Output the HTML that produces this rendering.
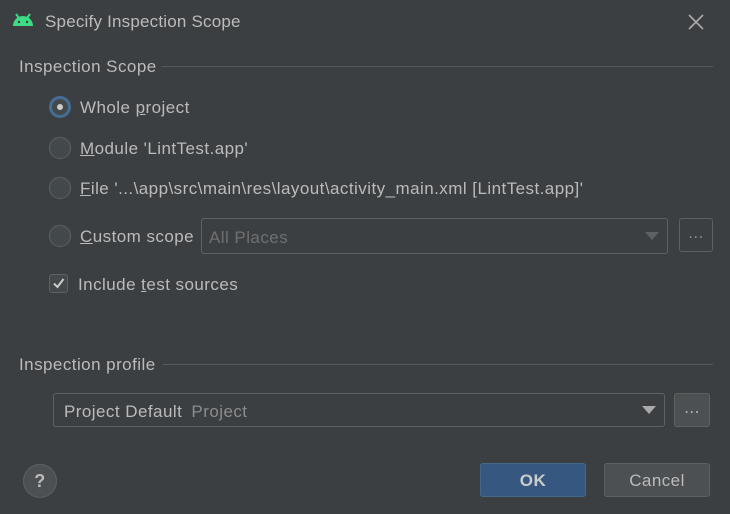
<!DOCTYPE html>
<html><head><meta charset="utf-8"><style>
*{margin:0;padding:0;box-sizing:border-box}
body{width:730px;height:514px;background:#3c3f41;font-family:"Liberation Sans",sans-serif;color:#bbbbbb;position:relative;overflow:hidden;font-size:17px;letter-spacing:0.45px}
.a{position:absolute;white-space:nowrap}
.sep{position:absolute;height:1px;background:#555859}
.radio{position:absolute;width:22px;height:22px;border-radius:50%;border:1px solid #5e6164;background:#43494a}
.box{position:absolute;border:1px solid #5e6164;border-radius:3px}
.btn{position:absolute;border:1px solid #5e6060;border-radius:3px;background:#4c5052;text-align:center;color:#bbb}
u{text-decoration:underline}
</style></head><body>
<svg class="a" style="left:11px;top:12px" width="24" height="16" viewBox="0 0 24 16"><path d="M2 14 A10 10 0 0 1 22 14 Z" fill="#3ddc84"/><line x1="5" y1="2" x2="8" y2="6" stroke="#3ddc84" stroke-width="2"/><line x1="19" y1="2" x2="16" y2="6" stroke="#3ddc84" stroke-width="2"/><circle cx="8" cy="10" r="1.2" fill="#3c3f41"/><circle cx="16" cy="10" r="1.2" fill="#3c3f41"/></svg>
<div class="a" style="left:45px;top:12px;letter-spacing:0.2px">Specify Inspection Scope</div>
<svg class="a" style="left:687px;top:13px" width="18" height="18"><path d="M2 2L16 16M16 2L2 16" stroke="#aaa" stroke-width="1.6"/></svg>
<div class="a" style="left:19px;top:57px">Inspection Scope</div>
<div class="sep" style="left:161px;top:66px;width:552px"></div>
<div class="radio" style="left:49px;top:96px;border:3px solid #466d94;background:#43494a"></div>
<div class="a" style="left:57px;top:104px;width:6px;height:6px;border-radius:50%;background:#ccc"></div>
<div class="a" style="left:80px;top:98px">Whole <u>p</u>roject</div>
<div class="radio" style="left:49px;top:137px"></div>
<div class="a" style="left:80px;top:139px"><u>M</u>odule 'LintTest.app'</div>
<div class="radio" style="left:49px;top:177px"></div>
<div class="a" style="left:80px;top:179px"><u>F</u>ile '...\app\src\main\res\layout\activity_main.xml [LintTest.app]'</div>
<div class="radio" style="left:49px;top:225px"></div>
<div class="a" style="left:80px;top:227px"><u>C</u>ustom scope</div>
<div class="box" style="left:201px;top:218px;width:467px;height:36px"></div>
<div class="a" style="left:209px;top:228px;color:#6e7072">All Places</div>
<svg class="a" style="left:645px;top:232px" width="14" height="8"><path d="M0 0H14L7 8Z" fill="#5e6163"/></svg>
<div class="btn" style="left:679px;top:218px;width:34px;height:34px;background:#3c3f41;color:#888;line-height:28px">...</div>
<div class="box" style="left:49px;top:274px;width:19px;height:19px;background:#43494a"></div>
<svg class="a" style="left:51px;top:276px" width="15" height="15"><path d="M3 7.5L6.5 11L12.5 3" stroke="#ccc" stroke-width="2" fill="none"/></svg>
<div class="a" style="left:78px;top:275px">Include <u>t</u>est sources</div>
<div class="a" style="left:19px;top:355px">Inspection profile</div>
<div class="sep" style="left:163px;top:364px;width:550px"></div>
<div class="box" style="left:53px;top:393px;width:612px;height:34px"></div>
<div class="a" style="left:64px;top:402px;color:#bbb">Project Default <span style="color:#8a8c8e;margin-left:4px">Project</span></div>
<svg class="a" style="left:642px;top:406px" width="14" height="8"><path d="M0 0H14L7 8Z" fill="#aaa"/></svg>
<div class="btn" style="left:674px;top:393px;width:36px;height:34px;line-height:28px">...</div>
<div class="a" style="left:23px;top:464px;width:34px;height:34px;border-radius:50%;background:#4c5052;border:1px solid #5e6060;text-align:center;line-height:32px;font-weight:bold;font-size:18px;color:#bbb">?</div>
<div class="btn" style="left:480px;top:463px;width:106px;height:34px;background:#365880;border-color:#43688c;line-height:34px;font-weight:bold;color:#ccc">OK</div>
<div class="btn" style="left:604px;top:463px;width:106px;height:34px;line-height:34px">Cancel</div>
</body></html>
